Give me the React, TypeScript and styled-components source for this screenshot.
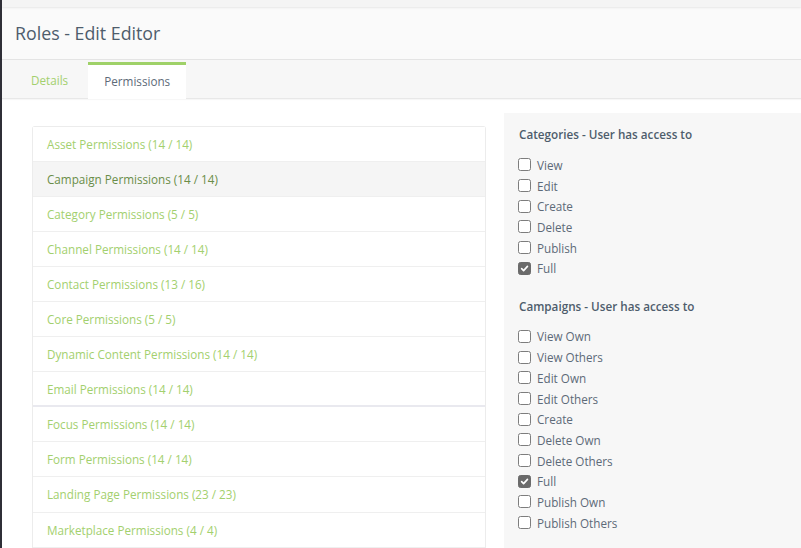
import React from "react";
import styled, { createGlobalStyle } from "styled-components";

const GlobalStyle = createGlobalStyle`
  html, body {
    margin: 0;
    padding: 0;
    background: #ffffff;
    font-family: "Open Sans", "Liberation Sans", sans-serif;
  }
  * {
    box-sizing: border-box;
  }
`;

const Page = styled.div`
  display: flex;
  flex-direction: column;
  min-height: 548px;
  border-left: 2px solid #2f2f37;
  overflow: hidden;
`;

const TopBand = styled.div`
  height: 7px;
  background: #f4f4f4;
  box-shadow: 0 1px 2px rgba(0, 0, 0, 0.08);
  position: relative;
  z-index: 1;
`;

const Header = styled.header`
  height: 53px;
  display: flex;
  align-items: center;
  padding: 0 13px;
  background: #fafafa;
  border-bottom: 1px solid #e4e4e4;
`;

const Title = styled.h1`
  margin: 0;
  font-size: 17.8px;
  font-weight: 400;
  color: #4e5d6c;
`;

const TabBar = styled.nav`
  height: 39px;
  display: flex;
  align-items: flex-end;
  gap: 4px;
  padding: 0 13px;
  background: #f7f7f7;
  border-bottom: 1px solid #e8e8e8;
  box-shadow: 0 1px 1px rgba(0, 0, 0, 0.03);
`;

const Tab = styled.div<{ $active?: boolean }>`
  height: ${(p) => (p.$active ? "37px" : "36px")};
  margin-bottom: ${(p) => (p.$active ? "-1px" : "0")};
  display: flex;
  align-items: center;
  padding: 0 16px 3px;
  font-size: 11.7px;
  color: ${(p) => (p.$active ? "#5d6a78" : "#a3d06e")};
  background: ${(p) => (p.$active ? "#ffffff" : "transparent")};
  border-top: 3px solid ${(p) => (p.$active ? "#9fd168" : "transparent")};
`;

const Content = styled.main`
  display: flex;
  align-items: flex-start;
  flex: 1;
`;

const LeftCol = styled.section`
  width: 502px;
  flex-shrink: 0;
  padding: 27px 18px 0 30px;
`;

const ListPanel = styled.ul`
  list-style: none;
  margin: 0;
  padding: 0;
  border: 1px solid #ececec;
  border-bottom: none;
  border-radius: 3px 3px 0 0;
  background: #ffffff;
`;

const ListRow = styled.li<{ $active?: boolean; $heavy?: boolean }>`
  height: 35.05px;
  display: flex;
  align-items: center;
  padding: 0 14px;
  font-size: 11.7px;
  color: ${(p) => (p.$active ? "#6a8d48" : "#a3d06e")};
  background: ${(p) => (p.$active ? "#f5f5f5" : "#ffffff")};
  border-bottom: ${(p) => (p.$heavy ? "2px solid #e9e9ef" : "1px solid #efefef")};
`;

const RightCol = styled.aside`
  flex: 1;
  align-self: stretch;
  margin-top: 14px;
  padding: 13px 14px 20px 15px;
  background: #f7f7f7;
`;

const Group = styled.div`
  & + & {
    margin-top: 19px;
  }
`;

const GroupTitle = styled.h4`
  margin: 0 0 11.5px;
  line-height: 17px;
  font-size: 11.7px;
  font-weight: 600;
  color: #4e5d6c;
`;

const CheckRow = styled.label`
  height: 20.7px;
  display: flex;
  align-items: center;
  gap: 6px;
  margin-left: -1px;
  font-size: 11.7px;
  color: #5d6a78;
`;

const Box = styled.span<{ $checked?: boolean }>`
  width: 13px;
  height: 13px;
  display: inline-flex;
  align-items: center;
  justify-content: center;
  border-radius: 2.5px;
  border: 1px solid ${(p) => (p.$checked ? "#6b6b6b" : "#7d7d7d")};
  background: ${(p) => (p.$checked ? "#6b6b6b" : "#ffffff")};
`;

const rows = [
  { label: "Asset Permissions (14 / 14)" },
  { label: "Campaign Permissions (14 / 14)", active: true },
  { label: "Category Permissions (5 / 5)" },
  { label: "Channel Permissions (14 / 14)" },
  { label: "Contact Permissions (13 / 16)" },
  { label: "Core Permissions (5 / 5)" },
  { label: "Dynamic Content Permissions (14 / 14)" },
  { label: "Email Permissions (14 / 14)", heavy: true },
  { label: "Focus Permissions (14 / 14)" },
  { label: "Form Permissions (14 / 14)" },
  { label: "Landing Page Permissions (23 / 23)" },
  { label: "Marketplace Permissions (4 / 4)" },
];

const groups = [
  {
    title: "Categories - User has access to",
    items: ["View", "Edit", "Create", "Delete", "Publish", "Full"],
    checked: ["Full"],
  },
  {
    title: "Campaigns - User has access to",
    items: [
      "View Own",
      "View Others",
      "Edit Own",
      "Edit Others",
      "Create",
      "Delete Own",
      "Delete Others",
      "Full",
      "Publish Own",
      "Publish Others",
    ],
    checked: ["Full"],
  },
];

const Check = ({ checked }: { checked: boolean }) => (
  <Box $checked={checked}>
    {checked && (
      <svg width="9" height="9" viewBox="0 0 10 10">
        <path
          d="M1.8 5.2 L4 7.4 L8.3 2.6"
          fill="none"
          stroke="#ffffff"
          strokeWidth="1.8"
          strokeLinecap="round"
          strokeLinejoin="round"
        />
      </svg>
    )}
  </Box>
);

const App = () => (
  <>
    <GlobalStyle />
    <Page>
      <TopBand />
      <Header>
        <Title>Roles - Edit Editor</Title>
      </Header>
      <TabBar>
        <Tab>Details</Tab>
        <Tab $active>Permissions</Tab>
      </TabBar>
      <Content>
        <LeftCol>
          <ListPanel>
            {rows.map((row) => (
              <ListRow key={row.label} $active={row.active} $heavy={row.heavy}>
                {row.label}
              </ListRow>
            ))}
          </ListPanel>
        </LeftCol>
        <RightCol>
          {groups.map((group) => (
            <Group key={group.title}>
              <GroupTitle>{group.title}</GroupTitle>
              {group.items.map((item) => (
                <CheckRow key={item}>
                  <Check checked={group.checked.includes(item)} />
                  {item}
                </CheckRow>
              ))}
            </Group>
          ))}
        </RightCol>
      </Content>
    </Page>
  </>
);

export default App;
